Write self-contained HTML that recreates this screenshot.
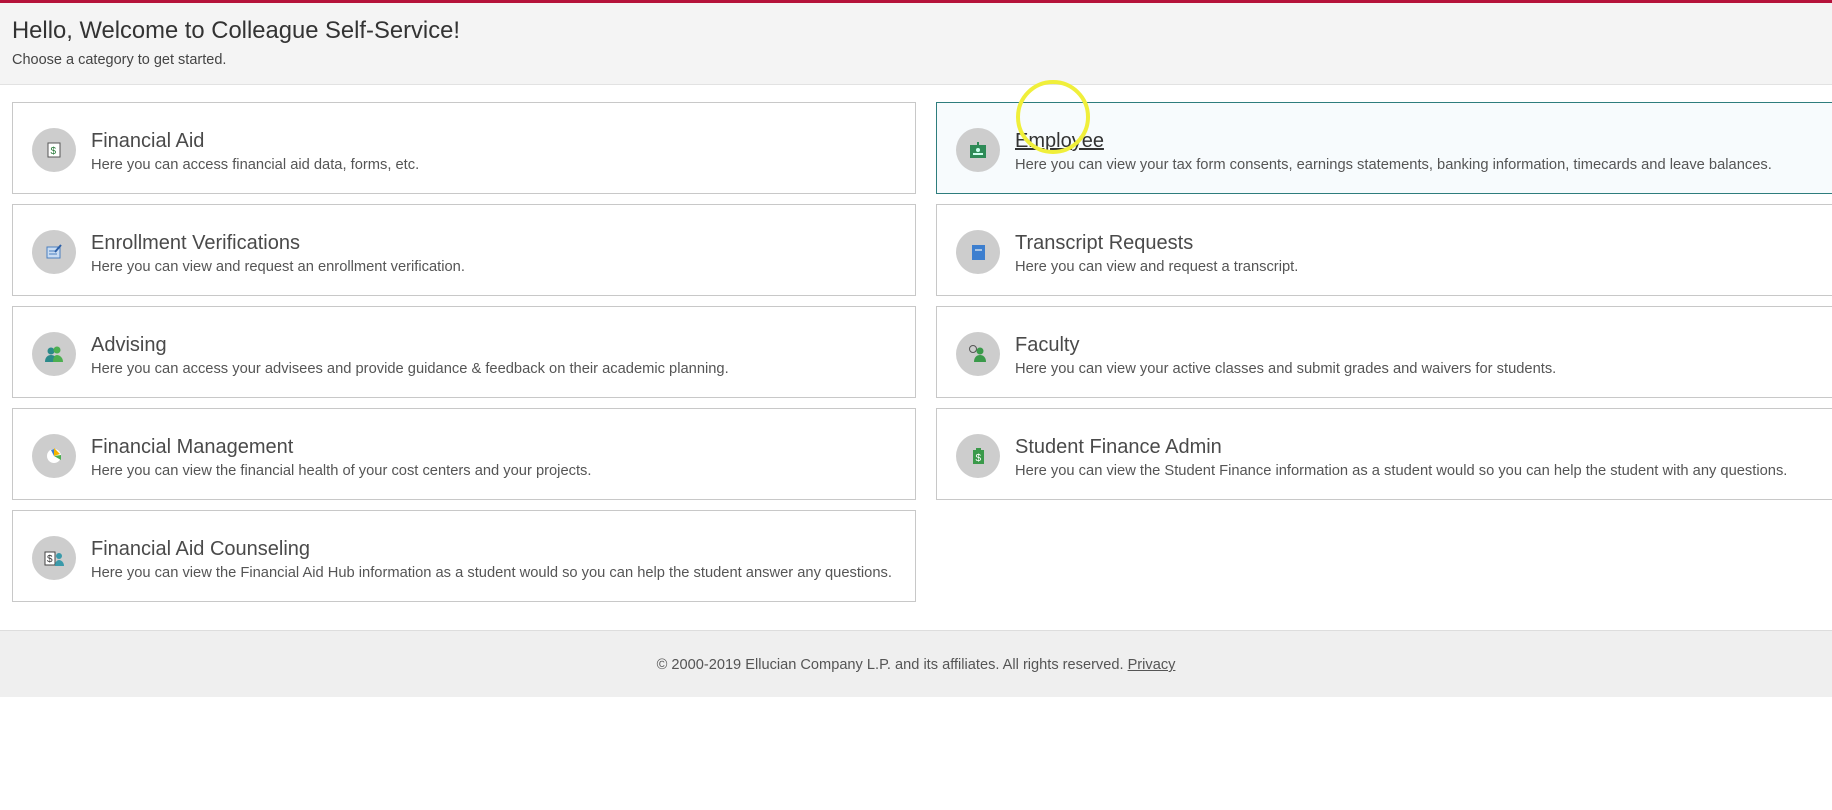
<!DOCTYPE html>
<html><head><meta charset="utf-8"><style>
*{margin:0;padding:0;box-sizing:border-box}
body{width:1832px;height:810px;background:#fff;font-family:"Liberation Sans",sans-serif;color:#333;position:relative;overflow:hidden}
.top{position:absolute;left:0;top:0;width:1832px;height:3px;background:#b5123a}
.hdr{position:absolute;left:0;top:3px;width:1832px;height:82px;background:#f4f4f4;border-bottom:1px solid #e2e2e2}
.hdr h1{position:absolute;left:12px;top:14px;font-size:23.8px;font-weight:normal;color:#333}
.hdr p{position:absolute;left:12px;top:49px;font-size:14.5px;color:#444}
.card{position:absolute;height:92px;border:1px solid #c8c8c8;background:#fff}
.card.l{left:12px;width:904px}
.card.r{left:936px;width:900px}
.card.hov{border-color:#2e7d7d;background:#f7fbfd}
.ic{position:absolute;left:19px;top:25px;width:44px;height:44px;border-radius:50%;background:#cdcdcd}
.ic svg{position:absolute;left:12px;top:12px}
.t{position:absolute;left:78px;top:27px;font-size:20px;color:#4a4a4a}
.d{position:absolute;left:78px;top:54px;font-size:14.7px;color:#555;white-space:nowrap}
.foot{position:absolute;left:0;top:630px;width:1832px;height:67px;background:#efefef;border-top:1px solid #ddd;text-align:center;font-size:14.6px;color:#555;line-height:68px}
.foot u{color:#555}
.cur{position:absolute;left:1016px;top:80px;width:74px;height:74px;border-radius:50%;border:4px solid #f0ef3a}
</style></head><body>
<div class="top"></div>
<div class="hdr"><h1>Hello, Welcome to Colleague Self-Service!</h1><p>Choose a category to get started.</p></div>

<div class="card l" style="top:102px"><div class="ic"><svg width="20" height="20"><rect x="4" y="3" width="12" height="14" fill="#fff" stroke="#555"/><text x="6.5" y="14" font-size="10" fill="#2a7a3a" font-family="Liberation Sans">$</text></svg></div><div class="t">Financial Aid</div><div class="d">Here you can access financial aid data, forms, etc.</div></div>
<div class="card r hov" style="top:102px"><div class="ic"><svg width="20" height="20"><rect x="2" y="5" width="16" height="13" fill="#2e8b57"/><rect x="9" y="2" width="2" height="4" fill="#2e8b57"/><circle cx="10" cy="10" r="2" fill="#cfe"/><rect x="5" y="13" width="10" height="2" fill="#cfe"/></svg></div><div class="t" style="text-decoration:underline;color:#333">Employee</div><div class="d">Here you can view your tax form consents, earnings statements, banking information, timecards and leave balances.</div></div>

<div class="card l" style="top:204px"><div class="ic"><svg width="20" height="20"><rect x="3" y="5" width="13" height="11" fill="#c9dcf2" stroke="#4a7fc0"/><path d="M5 9h7M5 12h8" stroke="#4a7fc0"/><path d="M11 10l6-7" stroke="#2b5fa8" stroke-width="2"/></svg></div><div class="t">Enrollment Verifications</div><div class="d">Here you can view and request an enrollment verification.</div></div>
<div class="card r" style="top:204px"><div class="ic"><svg width="20" height="20"><rect x="4" y="3" width="13" height="15" fill="#3d7fcf"/><path d="M7 8h7" stroke="#cde" stroke-width="1.5"/></svg></div><div class="t">Transcript Requests</div><div class="d">Here you can view and request a transcript.</div></div>

<div class="card l" style="top:306px"><div class="ic"><svg width="20" height="20"><circle cx="7" cy="7" r="3.5" fill="#2b8a8a"/><path d="M1 18c0-5 3-7 6-7s6 2 6 7z" fill="#2b8a8a"/><circle cx="13" cy="6" r="3.5" fill="#4caf50"/><path d="M9 18c0-5 2-7 4-7s6 2 6 7z" fill="#4caf50"/></svg></div><div class="t">Advising</div><div class="d">Here you can access your advisees and provide guidance &amp; feedback on their academic planning.</div></div>
<div class="card r" style="top:306px"><div class="ic"><svg width="20" height="20"><circle cx="5" cy="5" r="3.5" fill="none" stroke="#555"/><circle cx="12" cy="7" r="3.5" fill="#3a9a4a"/><path d="M6 18c0-5 3-7 6-7s6 2 6 7z" fill="#3a9a4a"/></svg></div><div class="t">Faculty</div><div class="d">Here you can view your active classes and submit grades and waivers for students.</div></div>

<div class="card l" style="top:408px"><div class="ic"><svg width="20" height="20"><circle cx="10" cy="10" r="7" fill="#fff"/><path d="M10 10V2l6 6z" fill="#f4b400"/><path d="M10 10V3l-3 1z" fill="#3d7fcf"/><path d="M10 10l7-1v5z" fill="#4caf50"/></svg></div><div class="t">Financial Management</div><div class="d">Here you can view the financial health of your cost centers and your projects.</div></div>
<div class="card r" style="top:408px"><div class="ic"><svg width="20" height="20"><rect x="5" y="4" width="11" height="14" fill="#3a9a4a"/><rect x="8" y="2" width="5" height="3" fill="#3a9a4a"/><text x="7.5" y="15" font-size="10" fill="#fff" font-family="Liberation Sans">$</text></svg></div><div class="t">Student Finance Admin</div><div class="d">Here you can view the Student Finance information as a student would so you can help the student with any questions.</div></div>

<div class="card l" style="top:510px"><div class="ic"><svg width="20" height="20"><rect x="1" y="4" width="10" height="13" fill="#fff" stroke="#444"/><text x="3" y="14" font-size="10" fill="#333" font-family="Liberation Sans">$</text><circle cx="15" cy="8" r="3" fill="#3a9aaa"/><path d="M11 18c0-4 2-6 4-6s5 2 5 6z" fill="#3a9aaa"/></svg></div><div class="t">Financial Aid Counseling</div><div class="d">Here you can view the Financial Aid Hub information as a student would so you can help the student answer any questions.</div></div>

<div class="foot">© 2000-2019 Ellucian Company L.P. and its affiliates. All rights reserved. <u>Privacy</u></div>
<div class="cur"></div>
</body></html>
